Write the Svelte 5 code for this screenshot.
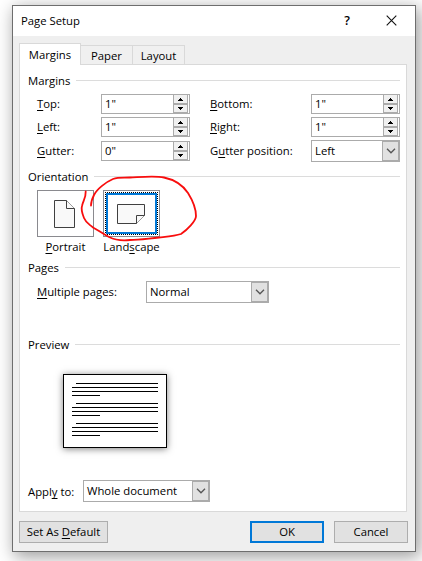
<script lang="ts">
	const tabs = ['Margins', 'Paper', 'Layout'];
	let activeTab = $state('Margins');
	let orientation = $state('landscape');

	const paragraphs = [0, 1, 2];
</script>

{#snippet spinner(value: string)}
	<div class="spinner">
		<span class="value">{value}</span>
		<div class="steps">
			<button aria-label="Increase">
				<svg width="5" height="3" viewBox="0 0 5 3" shape-rendering="crispEdges"><path d="M2 0h1v1h1v1h1v1H0V2h1V1h1z" /></svg>
			</button>
			<button aria-label="Decrease">
				<svg width="5" height="3" viewBox="0 0 5 3" shape-rendering="crispEdges"><path d="M0 0h5v1H4v1H3v1H2V2H1V1H0z" /></svg>
			</button>
		</div>
	</div>
{/snippet}

{#snippet dropdown(value: string, kind: string)}
	<div class="dropdown {kind}">
		<span class="value">{value}</span>
		<button class="arrow" aria-label="Open list">
			<svg width="10" height="6" viewBox="0 0 10 6"><path d="M1 .8l4 4 4-4" /></svg>
		</button>
	</div>
{/snippet}

<div class="dialog" role="dialog" aria-label="Page Setup">
	<header>
		<span class="title">Page Setup</span>
		<span class="help">?</span>
		<svg class="close" width="11" height="11" viewBox="0 0 11 11"><path d="M.7.7l9.6 9.6M10.3.7L.7 10.3" /></svg>
	</header>

	<nav class="tabs">
		{#each tabs as tab}
			<button class="tab" class:active={tab === activeTab} onclick={() => (activeTab = tab)}>{tab}</button>
		{/each}
	</nav>

	<main class="panel">
		<section class="margins">
			<h2>Margins</h2>
			<div class="fields">
				<span class="label"><u>T</u>op:</span>
				{@render spinner('1"')}
				<span class="label"><u>B</u>ottom:</span>
				{@render spinner('1"')}
				<span class="label"><u>L</u>eft:</span>
				{@render spinner('1"')}
				<span class="label"><u>R</u>ight:</span>
				{@render spinner('1"')}
				<span class="label"><u>G</u>utter:</span>
				{@render spinner('0"')}
				<span class="label">G<u>u</u>tter position:</span>
				{@render dropdown('Left', 'gutter')}
			</div>
		</section>

		<section class="orientation">
			<h2>Orientation</h2>
			<div class="options">
				<button class="option" class:selected={orientation === 'portrait'} onclick={() => (orientation = 'portrait')}>
					<span class="frame tall">
						<svg width="21" height="28" viewBox="0 0 21 28">
							<path d="M.5.5h12l8 8v19H.5z" />
							<path d="M12.5.5v8h8" />
						</svg>
					</span>
					<span><u>P</u>ortrait</span>
				</button>
				<button class="option" class:selected={orientation === 'landscape'} onclick={() => (orientation = 'landscape')}>
					<span class="frame">
						<svg width="28" height="20" viewBox="0 0 28 20">
							<path d="M.5.5h27v11l-8 8H.5z" />
							<path d="M19.5 19.5v-8h8" />
						</svg>
					</span>
					<span>Land<u>s</u>cape</span>
				</button>
			</div>
		</section>

		<section class="pages">
			<h2>Pages</h2>
			<div class="line-field">
				<span class="label"><u>M</u>ultiple pages:</span>
				{@render dropdown('Normal', 'multiple')}
			</div>
		</section>

		<section class="preview">
			<h2>Preview</h2>
			<div class="sheet">
				{#each paragraphs as p (p)}
					<div class="paragraph"><i></i><i></i><i></i><i></i></div>
				{/each}
			</div>
			<div class="apply">
				<span>Appl<u>y</u> to:</span>
				{@render dropdown('Whole document', 'whole')}
			</div>
		</section>
	</main>

	<footer>
		<button class="default">Set As <u>D</u>efault</button>
		<button class="ok">OK</button>
		<button>Cancel</button>
	</footer>

	<!-- hand-drawn marker around the landscape option -->
	<svg class="marker" width="122" height="70" viewBox="78 173 122 70">
		<path d="M91 205.5C91 201 92.5 198 94 195C97 189 106 182 113 179C119 177 124 178 130 177.500C141 177 155 175.500 164 177.500C176 180 184 187 188 193C193 201 196 208 196 216C196 221 187 230 181 234C175 236 168 236.500 159 237.500C148 238.500 139 240 130 240C122 241 115 240 109 237C103 234 98 230 93 227.500C89 224 86 223 84 218C82 213 81 209 82 206C83 201 86 198 85.700 191.500" />
	</svg>
</div>

<style>
	:global(body) {
		display: flow-root;
		height: 100vh;
		margin: 0;
		background: #fff;
		overflow: hidden;
	}

	.dialog {
		position: relative;
		box-sizing: border-box;
		width: 404px;
		height: 547px;
		margin: 5px 0 0 12px;
		border: 1px solid #6e6e6e;
		background: #efefef;
		box-shadow: 3px 4px 16px 1px rgba(0, 0, 0, 0.38);
		font: 11.3px/15px 'Open Sans', 'Noto Sans', sans-serif;
		color: #000;
	}

	button {
		box-sizing: border-box;
		margin: 0;
		padding: 0;
		border: 0;
		font: inherit;
		color: inherit;
	}

	u {
		text-underline-offset: 2px;
		text-decoration-thickness: 1px;
		text-decoration-skip-ink: none;
	}

	header {
		display: flex;
		align-items: center;
		height: 30px;
		padding: 0 18px 0 8px;
		background: #fff;
	}

	.title {
		flex: 1;
		padding-bottom: 2px;
	}

	.help {
		margin-right: 36px;
		padding-bottom: 2px;
		font-size: 12.5px;
		font-weight: 600;
	}

	.close {
		margin-bottom: 1px;
		fill: none;
		stroke: #111;
		stroke-width: 1.1;
	}

	.tabs {
		display: flex;
		align-items: flex-end;
		height: 28px;
		padding-left: 6px;
	}

	.tab {
		width: 52px;
		height: 19px;
		border: 1px solid #d9d9d9;
		border-width: 1px 1px 0 0;
		background: #f0f0f0;
	}

	.tab.active {
		position: relative;
		width: 62px;
		height: 22px;
		margin-bottom: -1px;
		padding-bottom: 1px;
		border-left-width: 1px;
		background: #fff;
	}

	.panel {
		box-sizing: border-box;
		width: 388px;
		height: 448px;
		margin-left: 6px;
		padding: 8px 6px 0 8px;
		border: 1px solid #d9d9d9;
		background: #fff;
	}

	h2 {
		display: flex;
		align-items: center;
		gap: 6px;
		height: 15px;
		margin: 0 0 6px;
		font-size: inherit;
		font-weight: 400;
	}

	h2::after {
		content: '';
		flex: 1;
		height: 1px;
		background: #dcdcdc;
	}

	.fields {
		display: grid;
		grid-template-columns: 64px 109px 101px 89px;
		grid-template-rows: 20px 20px 22px;
		row-gap: 3px;
		align-items: center;
		padding-left: 9px;
	}

	.label {
		padding-bottom: 2px;
	}

	.spinner,
	.dropdown {
		box-sizing: border-box;
		display: flex;
		border: 1px solid #ababab;
		background: #fff;
	}

	.spinner {
		width: 89px;
		height: 20px;
		padding-right: 1px;
	}

	.value {
		flex: 1;
		align-self: center;
		padding: 0 0 1px 3px;
		white-space: nowrap;
	}

	.steps {
		display: flex;
		flex-direction: column;
		width: 15px;
	}

	.steps button {
		display: flex;
		align-items: center;
		justify-content: center;
		height: 9px;
		border: 1px solid #ababab;
		border-top: 0;
		background: #f0f0f0;
	}

	.steps button + button {
		border-top: 1px solid #ababab;
	}

	.dropdown {
		height: 22px;
	}

	.dropdown .arrow {
		display: flex;
		align-items: center;
		justify-content: center;
		width: 17px;
		border: 1px solid #ababab;
		background: #e1e1e1;
	}

	.arrow path {
		fill: none;
		stroke: #555;
		stroke-width: 1.3;
	}

	.gutter {
		width: 89px;
	}

	.multiple {
		width: 123px;
	}

	.whole {
		width: 127px;
	}

	.orientation {
		margin-top: 7px;
	}

	.options {
		display: flex;
		gap: 9px;
		padding-left: 9px;
	}

	.option {
		display: flex;
		flex-direction: column;
		align-items: center;
		gap: 2px;
		width: 57px;
		height: 64px;
		background: none;
		white-space: nowrap;
	}

	.frame {
		position: relative;
		box-sizing: border-box;
		display: flex;
		align-items: center;
		justify-content: center;
		width: 57px;
		height: 47px;
		padding: 1px 1px 0 0;
		border: 1px solid #8a8a8f;
	}

	.frame.tall {
		padding-right: 2px;
	}

	.frame path {
		fill: #f9f9f9;
		stroke: #404040;
	}

	.selected .frame::before {
		content: '';
		position: absolute;
		inset: 1px;
		border: 1px dotted #000;
	}

	.selected .frame::after {
		content: '';
		position: absolute;
		inset: 2px;
		border: 2px solid #0078d7;
	}

	.pages {
		margin-top: 6px;
	}

	.line-field,
	.apply {
		display: flex;
		align-items: center;
	}

	.line-field {
		padding-left: 9px;
	}

	.line-field > .label {
		width: 109px;
	}

	.preview {
		margin-top: 34px;
	}

	.sheet {
		box-sizing: border-box;
		display: flex;
		flex-direction: column;
		gap: 7px;
		width: 104px;
		height: 74px;
		margin: 22px 0 0 35px;
		padding: 8px;
		border: 1px solid #000;
		background: #fff;
		box-shadow: 0 1px 7px rgba(0, 0, 0, 0.5);
	}

	.paragraph {
		display: flex;
		flex-direction: column;
		gap: 3px;
	}

	.paragraph i {
		height: 1px;
		background: #000;
	}

	.paragraph i:first-child {
		margin-left: 4px;
	}

	.paragraph i:last-child {
		width: 28px;
	}

	.apply {
		margin-top: 32px;
	}

	.apply > span {
		width: 55px;
	}

	footer {
		display: flex;
		gap: 10px;
		padding: 9px 7px 0 6px;
	}

	footer button {
		width: 74px;
		height: 22px;
		padding-bottom: 1px;
		border: 1px solid #adadad;
		background: #e1e1e1;
	}

	footer .default {
		width: 89px;
		margin-right: auto;
	}

	footer .ok {
		border: 2px solid #0078d7;
	}

	.marker {
		position: absolute;
		top: 167px;
		left: 65px;
		pointer-events: none;
	}

	.marker path {
		fill: none;
		stroke: #f80d0d;
		stroke-width: 1.8;
		stroke-linecap: round;
	}
</style>
